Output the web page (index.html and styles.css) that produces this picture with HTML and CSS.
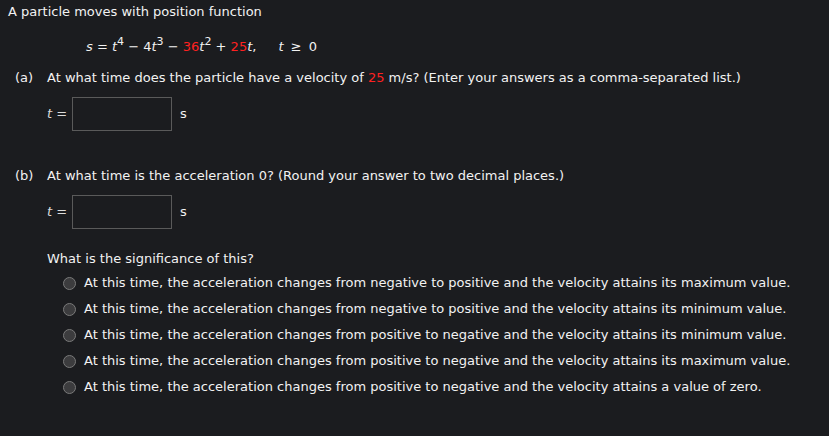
FILE: index.html
```html
<!DOCTYPE html>
<html lang="en">
<head>
    <meta charset="UTF-8">
    <title>Particle motion</title>
    <link rel="stylesheet" href="styles.css">
</head>
<body>

<div class="question">
    <p class="intro">A particle moves with position function</p>
    <p class="equation">
        <i>s</i> = <i>t</i><sup>4</sup> &minus; 4<i>t</i><sup>3</sup> &minus; <span class="red">36</span><i>t</i><sup>2</sup> + <span class="red">25</span><i>t</i>,<span class="cond"><i>t</i> <span class="op">&ge;</span> 0</span>
    </p>

    <div class="part">
        <div class="part__label">(a)</div>
        <div class="part__body">
            <p class="part__text">At what time does the particle have a velocity of <span class="red">25</span> m/s? (Enter your answers as a comma-separated list.)</p>
            <div class="answer">
                <span class="answer__var"><i>t</i> =</span>
                <input type="text" class="answer__input">
                <span class="answer__unit">s</span>
            </div>
        </div>
    </div>

    <div class="part">
        <div class="part__label">(b)</div>
        <div class="part__body">
            <p class="part__text">At what time is the acceleration 0? (Round your answer to two decimal places.)</p>
            <div class="answer">
                <span class="answer__var"><i>t</i> =</span>
                <input type="text" class="answer__input">
                <span class="answer__unit">s</span>
            </div>

            <p class="part__text sign">What is the significance of this?</p>
            <ul class="choices">
                <li><label><span class="radio"></span>At this time, the acceleration changes from negative to positive and the velocity attains its maximum value.</label></li>
                <li><label><span class="radio"></span>At this time, the acceleration changes from negative to positive and the velocity attains its minimum value.</label></li>
                <li><label><span class="radio"></span>At this time, the acceleration changes from positive to negative and the velocity attains its minimum value.</label></li>
                <li><label><span class="radio"></span>At this time, the acceleration changes from positive to negative and the velocity attains its maximum value.</label></li>
                <li><label><span class="radio"></span>At this time, the acceleration changes from positive to negative and the velocity attains a value of zero.</label></li>
            </ul>
        </div>
    </div>
</div>

</body>
</html>
```

FILE: styles.css
```css
html, body{
    margin: 0;
    background-color: #1b1c1f;
}
body{
    color: #f2f2f2;
    font-family: "DejaVu Sans", Verdana, sans-serif;
    font-size: 13px;
    line-height: 16px;
}
p{
    margin: 0;
}
.question{
    padding: 4px 8px;
}
.red{
    color: #ff2121;
}
.equation{
    margin: 19px 0 0 78px;
    font-size: 13px;
}
.equation sup{
    font-size: 11px;
    line-height: 0;
    vertical-align: 6px;
}
.cond{
    margin-left: 22px;
}
.op{
    margin: 0 3px;
}
.part{
    display: flex;
    margin-top: 15px;
}
.part__label{
    width: 32px;
    padding-left: 7px;
}
.answer{
    display: flex;
    align-items: center;
    margin: 11px 0 0 0;
}
.answer__var{
    width: 25px;
    color: #dcdcdc;
}
.answer__input{
    width: 100px;
    height: 34px;
    box-sizing: border-box;
    background-color: #1b1c1f;
    border: 1px solid #5a5a5a;
    margin: 0;
}
.answer__unit{
    margin-left: 8px;
}
.part + .part{
    margin-top: 37px;
}
.sign{
    margin-top: 22px;
}
.choices{
    list-style: none;
    margin: 8px 0 0 16px;
    padding: 0;
}
.choices li{
    height: 26px;
}
.choices label{
    display: flex;
    align-items: center;
}
.radio{
    width: 11px;
    height: 11px;
    border: 1px solid #7a7a7a;
    border-radius: 50%;
    background-color: #3c3c3e;
    margin-right: 8px;
    flex: none;
}
```
